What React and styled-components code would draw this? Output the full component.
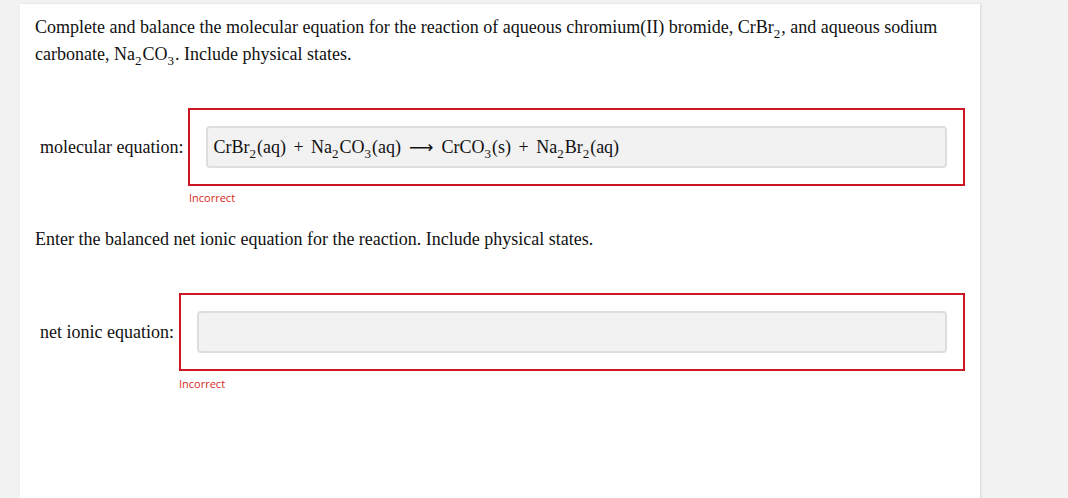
import React from 'react';
import styled, { createGlobalStyle } from 'styled-components';

const GlobalStyle = createGlobalStyle`
  html, body {
    margin: 0;
    padding: 0;
    background: #f2f2f2;
    overflow: hidden;
  }
`;

const Page = styled.div`
  padding: 4px 0 0 20px;
  height: 498px;
  box-sizing: border-box;
  overflow: hidden;
`;

const Card = styled.div`
  width: 960px;
  min-height: 540px;
  background: #fff;
  box-shadow: 1px 0 2px rgba(0, 0, 0, 0.12);
  padding: 10px 15px 0;
  box-sizing: border-box;
  font-family: "Liberation Serif", "Times New Roman", serif;
  font-size: 18px;
  color: #111;
`;

const Prompt = styled.p`
  margin: ${(p) => p.$top || 0}px 0 0;
  line-height: 27px;
`;

const Sub = styled.sub`
  font-size: 13px;
  vertical-align: -5px;
  line-height: 0;
  margin-right: 1px;
`;

const Plus = styled.span`
  margin: 0 3px;
`;

const Row = styled.div`
  display: flex;
  align-items: center;
  margin-top: ${(p) => p.$top}px;
  padding-left: 5px;
`;

const Label = styled.label`
  margin-right: 5px;
  white-space: nowrap;
`;

const Field = styled.div`
  flex: 1;
  height: 78px;
  border: 2px solid #cc1626;
  padding: 16px;
  box-sizing: border-box;
`;

const Input = styled.div`
  height: 42px;
  border: 2px solid #dedede;
  border-radius: 4px;
  background: #f2f2f2;
  box-sizing: border-box;
  padding: 0 5px;
  display: flex;
  align-items: center;
  white-space: nowrap;
`;

const Arrow = styled.span`
  display: inline-block;
  margin: 0 8px 0 8px;
  font-family: "DejaVu Sans", sans-serif;
  font-size: 17px;
`;

const Feedback = styled.div`
  font-family: "Open Sans", Arial, sans-serif;
  font-size: 11px;
  line-height: 15px;
  color: #d42a1c;
  margin: ${(p) => p.$top}px 0 0 ${(p) => p.$left}px;
`;

const Equation = () => (
  <span>
    CrBr<Sub>2</Sub>(aq)<Plus> + </Plus>Na<Sub>2</Sub>CO<Sub>3</Sub>(aq)
    <Arrow>⟶</Arrow>
    CrCO<Sub>3</Sub>(s)<Plus> + </Plus>Na<Sub>2</Sub>Br<Sub>2</Sub>(aq)
  </span>
);

export default function App() {
  return (
    <>
      <GlobalStyle />
      <Page>
        <Card>
          <Prompt>
            Complete and balance the molecular equation for the reaction of aqueous chromium(II) bromide, CrBr<Sub>2</Sub>, and aqueous sodium
            carbonate, Na<Sub>2</Sub>CO<Sub>3</Sub>. Include physical states.
          </Prompt>
          <Row $top={40}>
            <Label>molecular equation:</Label>
            <Field>
              <Input>
                <Equation />
              </Input>
            </Field>
          </Row>
          <Feedback $top={4} $left={154}>Incorrect</Feedback>
          <Prompt $top={21}>
            Enter the balanced net ionic equation for the reaction. Include physical states.
          </Prompt>
          <Row $top={40}>
            <Label>net ionic equation:</Label>
            <Field>
              <Input />
            </Field>
          </Row>
          <Feedback $top={5} $left={144}>Incorrect</Feedback>
        </Card>
      </Page>
    </>
  );
}
